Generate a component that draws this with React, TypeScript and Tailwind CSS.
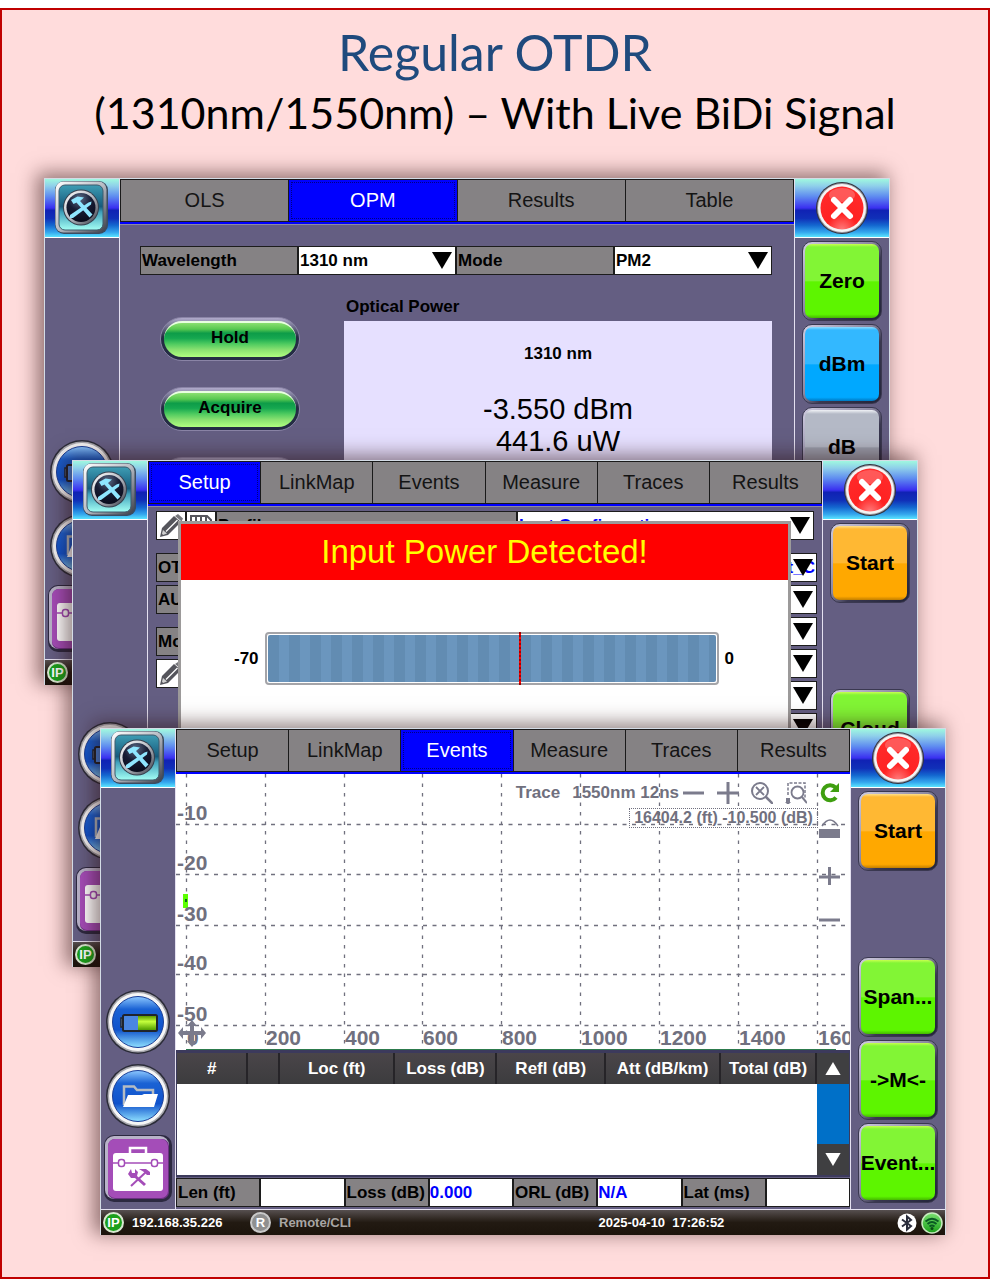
import { useState } from "react"
import type { ReactNode } from "react"

type Tone = "green" | "blue" | "gray" | "orange"

interface SideAction {
  label: string
  tone: Tone
}

const toneClasses: Record<Tone, string> = {
  green: "bg-[linear-gradient(to_bottom,#c8ff50_0,#82f535_3px,#82f535_50%,#5df500_51%,#5df500_95%,#45b800_100%)]",
  blue: "bg-[linear-gradient(to_bottom,#8fdcff_0,#33b8ff_3px,#33b8ff_50%,#00a8ff_51%,#00a8ff_95%,#0078c0_100%)]",
  gray: "bg-[linear-gradient(to_bottom,#f0f2f6_0,#b4b9c6_4px,#b4b9c6_50%,#9a9eac_51%,#9a9eac_95%,#70747f_100%)]",
  orange: "bg-[linear-gradient(to_bottom,#ffe08a_0,#ffb833_3px,#ffb833_50%,#ffa800_51%,#ffa800_95%,#c27e00_100%)]",
}

const headerGradient =
  "bg-[linear-gradient(to_bottom,#9ff8df_0%,#8fd0ea_12%,#5f8cf0_30%,#3a30f0_50%,#1022b4_54%,#1030b8_68%,#1468d0_80%,#35a8ee_92%,#5ae4ff_100%)]"

// Gradients shared by all icons on the page
function IconDefs() {
  return (
    <svg className="absolute size-0" aria-hidden="true">
      <defs>
        <linearGradient id="silver" x1="0" y1="0" x2="1" y2="1">
          <stop offset="0" stopColor="#ffffff" />
          <stop offset="0.5" stopColor="#b8bcc4" />
          <stop offset="1" stopColor="#3a3d48" />
        </linearGradient>
        <linearGradient id="teal" x1="0" y1="0" x2="0" y2="1">
          <stop offset="0" stopColor="#3e9db4" />
          <stop offset="0.48" stopColor="#165a7c" />
          <stop offset="0.6" stopColor="#3f9fba" />
          <stop offset="1" stopColor="#a4fff4" />
        </linearGradient>
        <radialGradient id="navy" cx="0.45" cy="0.2" r="0.8">
          <stop offset="0" stopColor="#5a6a86" />
          <stop offset="0.5" stopColor="#171c34" />
          <stop offset="1" stopColor="#0a0c1c" />
        </radialGradient>
        <radialGradient id="red" cx="0.5" cy="1" r="0.9">
          <stop offset="0" stopColor="#ff7a7a" />
          <stop offset="0.4" stopColor="#ff2222" />
          <stop offset="1" stopColor="#ff2a2a" />
        </radialGradient>
        <linearGradient id="ball" x1="0" y1="0" x2="0" y2="1">
          <stop offset="0" stopColor="#8cc8ff" />
          <stop offset="0.25" stopColor="#1a62d4" />
          <stop offset="0.65" stopColor="#0f52cc" />
          <stop offset="1" stopColor="#8fe0ff" />
        </linearGradient>
        <linearGradient id="cell" x1="0" y1="0" x2="0" y2="1">
          <stop offset="0" stopColor="#5c9a00" />
          <stop offset="0.4" stopColor="#c4ff3c" />
          <stop offset="1" stopColor="#4f9c00" />
        </linearGradient>
        <linearGradient id="leaf" x1="0" y1="0" x2="0" y2="1">
          <stop offset="0" stopColor="#7ae070" />
          <stop offset="1" stopColor="#1aa01a" />
        </linearGradient>
      </defs>
    </svg>
  )
}

function ToolIcon() {
  return (
    <svg viewBox="0 0 56 56" className="size-14" aria-hidden="true">
      <rect x="1" y="1" width="53" height="53" rx="9" fill="#3b4c60" />
      <rect x="1.500" y="1.500" width="51" height="51" rx="8" fill="url(#silver)" />
      <rect x="5" y="5" width="44" height="45" rx="6" fill="url(#teal)" stroke="#3c5a6c" />
      <circle cx="27" cy="27.500" r="18" fill="#35404e" />
      <circle cx="27" cy="27.500" r="17" fill="url(#silver)" />
      <circle cx="27" cy="27.500" r="14.500" fill="url(#navy)" />
      <path d="M17 20 23.500 16.500 30 17.500 26 21 38.500 34.500 35.500 37.500 22.500 22.500 19.500 24Z" fill="#8fe6ff" />
      <path d="M16 35 34.500 22.500 37.500 21.500 37 24.500 19 38 16 38Z" fill="#8fe6ff" />
    </svg>
  )
}

function CloseIcon() {
  return (
    <svg viewBox="0 0 54 54" className="size-[54px]" aria-hidden="true">
      <circle cx="27" cy="27" r="26" fill="#33333c" />
      <circle cx="27" cy="27" r="25" fill="#9a9aa2" />
      <circle cx="27" cy="27" r="24" fill="#f4f4f4" />
      <circle cx="27" cy="27" r="21.500" fill="url(#red)" />
      <ellipse cx="27" cy="14" rx="13" ry="7" fill="#ffffff" opacity="0.22" />
      <path d="M19 19 35 35M35 19 19 35" stroke="#ffffff" strokeWidth="6" strokeLinecap="round" />
    </svg>
  )
}

function BallIcon({ children }: { children: ReactNode }) {
  return (
    <svg viewBox="0 0 68 68" className="size-[68px]" aria-hidden="true">
      <circle cx="34" cy="35" r="32" fill="#2b2c38" />
      <circle cx="34" cy="35" r="30.500" fill="#a8a8ae" />
      <circle cx="34" cy="35" r="29" fill="#f6f6f6" />
      <circle cx="34" cy="35" r="25.500" fill="url(#ball)" stroke="#1a3f98" />
      {children}
    </svg>
  )
}

function BatteryIcon() {
  return (
    <BallIcon>
      <rect x="17" y="31" width="4" height="9" fill="#a9c4ec" stroke="#20242c" strokeWidth="1.500" />
      <rect x="19" y="28" width="34" height="16" rx="1.500" fill="#4a86e0" stroke="#20242c" strokeWidth="2" />
      <rect x="34" y="29" width="18" height="14" fill="url(#cell)" />
    </BallIcon>
  )
}

function FolderIcon() {
  return (
    <BallIcon>
      <path d="M20 44V25.500H30L33 29H49V35" fill="none" stroke="#b4bcc4" strokeWidth="2.500" />
      <path d="M24 34H38L40 33H54L50 46H19Z" fill="#ffffff" />
    </BallIcon>
  )
}

function ToolboxIcon() {
  return (
    <svg viewBox="0 0 68 68" className="size-[68px]" aria-hidden="true">
      <rect x="0" y="0" width="68" height="67" rx="10" fill="#2c2940" />
      <rect x="1" y="1" width="64" height="63" rx="9" fill="#b8b2c8" />
      <rect x="4" y="4" width="61" height="60" rx="7" fill="#6a3080" />
      <rect x="4" y="4" width="60" height="59" rx="7" fill="#a44db8" />
      <path d="M26 20V13H42V20" fill="none" stroke="#ffffff" strokeWidth="2.500" />
      <rect x="9" y="18" width="50" height="38" rx="3" fill="#ffffff" />
      <path d="M9 28H59" stroke="#a44db8" strokeWidth="1.500" />
      <rect x="14.500" y="24.500" width="6" height="7" rx="2.500" fill="#ffffff" stroke="#a44db8" strokeWidth="1.500" />
      <rect x="47.500" y="24.500" width="6" height="7" rx="2.500" fill="#ffffff" stroke="#a44db8" strokeWidth="1.500" />
      <path d="M27 51 42 37" stroke="#a44db8" strokeWidth="2" />
      <path d="M35 34H42L46 37 46 40 43 40 40 37Z" fill="#a44db8" />
      <path d="M27 34 28 38 31 38 31 34 34 37 33 41 42 49 40 51 31 43 27 43 24 39Z" fill="#a44db8" />
    </svg>
  )
}

function DownTriangle({ className }: { className?: string }) {
  return (
    <svg viewBox="0 0 20 17" className={className} aria-hidden="true">
      <path d="M0 0H20L10 17Z" fill="currentColor" />
    </svg>
  )
}

function PencilIcon() {
  return (
    <svg viewBox="0 0 26 26" className="size-[26px]" aria-hidden="true">
      <path d="M2 24 4 15 16 3 23 9 10 22Z" fill="#55555c" />
      <path d="M8 18.500 19.500 7" stroke="#ffffff" strokeWidth="1.200" />
      <path d="M17 3 20 1 25 5.500 23.500 8.500Z" fill="#77777c" />
      <path d="M5 17 9 20.500 5 22 4 20.500Z" fill="#d0d0d0" />
    </svg>
  )
}

function DiskIcon() {
  return (
    <svg viewBox="0 0 26 26" className="size-[26px]" aria-hidden="true">
      <path d="M3 3H19L23 7V23H3Z" fill="none" stroke="#55555c" strokeWidth="2" />
      <path d="M8 3V12H18V3M13 3V9" fill="none" stroke="#55555c" strokeWidth="2" />
    </svg>
  )
}

function StatusBadge({ text, gray }: { text: string; gray?: boolean }) {
  return (
    <span
      className={`flex size-[21px] items-center justify-center rounded-full border-2 text-[13px] leading-none font-bold text-white ${
        gray ? "border-[#c9c9c9] bg-[#8f8f8f]" : "border-[#d8e8d0] bg-[#1ba01b]"
      }`}
    >
      {text}
    </span>
  )
}

function StatusBar() {
  return (
    <footer className="flex h-[25px] items-center bg-linear-to-b from-[#575050] via-[#221a12] via-50% to-[#1c140c] px-[2px] text-[13px] font-bold text-white">
      <div className="flex w-[59%] items-center">
        <StatusBadge text="IP" />
        <span className="ml-2 w-[118px]">192.168.35.226</span>
        <StatusBadge text="R" gray />
        <span className="ml-2 text-[#a8a5a3]">Remote/CLI</span>
      </div>
      <time className="whitespace-pre">2025-04-10  17:26:52</time>
      <div className="ml-auto flex items-center gap-1">
        <svg viewBox="0 0 20 20" className="size-5" aria-label="Bluetooth">
          <circle cx="10" cy="10" r="9.500" fill="#ffffff" />
          <path d="M5 6.500 14 13 10 16.500V3.500L14 7 5 13.500" fill="none" stroke="#2a2d3c" strokeWidth="2" />
        </svg>
        <svg viewBox="0 0 22 22" className="size-[22px]" aria-label="Wi-Fi">
          <circle cx="11" cy="11" r="10" fill="url(#leaf)" stroke="#c8ecc0" strokeWidth="1.500" />
          <path d="M4.500 9.500Q11 4 17.500 9.500M6.500 12Q11 8 15.500 12M8.500 14.500Q11 12.500 13.500 14.500" fill="none" stroke="#0a5a24" strokeWidth="1.800" />
          <circle cx="11" cy="16.500" r="1.500" fill="#0a4a14" />
        </svg>
      </div>
    </footer>
  )
}

function SideButton({ label, tone }: SideAction) {
  return (
    <button
      type="button"
      className="h-20 w-20 rounded-[10px] border border-[#3a3850] bg-[linear-gradient(135deg,#cfcbe0_0%,#8a86a0_45%,#3a3850_60%,#22243a_100%)] p-[2px]"
    >
      <span
        className={`flex h-full items-center justify-center rounded-[7px] text-[21px] font-bold text-black ${toneClasses[tone]}`}
      >
        {label}
      </span>
    </button>
  )
}

interface DeviceWindowProps {
  tabs: string[]
  initialTab: string
  actions: (SideAction | null)[]
  className: string
  children: ReactNode
}

function DeviceWindow({ tabs, initialTab, actions, className, children }: DeviceWindowProps) {
  const [active, setActive] = useState(initialTab)

  return (
    <section className={`relative border-x border-t border-[#d4dce6] bg-[#645e82] shadow-[-5px_-3px_18px_2px_rgba(40,10,10,0.5)] ${className}`}>
      <div className="flex min-h-[481px] border-b border-[#e4e0f0]">
        {/* Left rail */}
        <div className="flex w-[75px] shrink-0 flex-col items-center border-r border-[#e4e0f0]">
          <button type="button" aria-label="Tools" className={`flex h-[59px] w-full items-center justify-center border-b border-white ${headerGradient}`}>
            <ToolIcon />
          </button>
          <div className="mt-auto flex flex-col gap-[6px] pb-[6px]">
            <button type="button" aria-label="Battery"><BatteryIcon /></button>
            <button type="button" aria-label="Files"><FolderIcon /></button>
            <button type="button" aria-label="Toolbox"><ToolboxIcon /></button>
          </div>
        </div>

        <div className="relative flex min-w-0 flex-1 flex-col">
          <nav className="flex border-b-2 border-[#0000ff]">
            {tabs.map((tab) => (
              <button
                key={tab}
                type="button"
                onClick={() => setActive(tab)}
                className={`h-[43px] flex-1 basis-0 border-y border-r border-[#1a1a1a] p-[2px] text-[20px] first:border-l ${
                  tab === active ? "bg-[#0000ff] text-white" : "bg-[#858284] text-[#141414]"
                }`}
              >
                <span
                  className={`flex h-full items-center justify-center border border-dotted pb-[2px] ${
                    tab === active ? "border-[#000080]" : "border-transparent"
                  }`}
                >
                  {tab}
                </span>
              </button>
            ))}
          </nav>
          {children}
        </div>

        {/* Right rail */}
        <div className="w-[95px] shrink-0 border-l border-[#e4e0f0]">
          <button type="button" aria-label="Close" className={`flex h-[59px] w-full items-center justify-center border-b border-white ${headerGradient}`}>
            <CloseIcon />
          </button>
          <div className="flex flex-col gap-[3px] pt-[3px] pl-[7px]">
            {actions.map((action, i) =>
              action ? <SideButton key={i} {...action} /> : <div key={i} className="h-20" />
            )}
          </div>
        </div>
      </div>
      <StatusBar />
    </section>
  )
}

interface FieldSelectProps {
  id: string
  options: string[]
  label?: string
  className?: string
}

function FieldSelect({ id, options, label, className }: FieldSelectProps) {
  return (
    <div className="relative min-w-0 flex-1 basis-0">
      <select
        id={id}
        aria-label={label}
        className={`block h-[29px] w-full appearance-none border border-[#1c1c1c] bg-white px-px text-[17px] font-bold ${className ?? "text-black"}`}
      >
        {options.map((option) => (
          <option key={option}>{option}</option>
        ))}
      </select>
      <DownTriangle className="pointer-events-none absolute top-[6px] right-1 h-[17px] w-5 text-black" />
    </div>
  )
}

const labelCell = "flex h-[29px] items-center border border-[#1c1c1c] bg-[#858284] px-px text-[17px] font-bold text-black"

function PowerMeter() {
  return (
    <div className="border-t border-[#8c8aa0] pt-[21px] pr-[22px] pl-5">
      <div className="flex">
        <label htmlFor="wavelength" className={`${labelCell} w-1/4`}>Wavelength</label>
        <FieldSelect id="wavelength" options={["1310 nm", "1550 nm"]} />
        <label htmlFor="mode" className={`${labelCell} w-1/4`}>Mode</label>
        <FieldSelect id="mode" options={["PM2", "PM1"]} />
      </div>
      <div className="flex gap-11 pt-[19px] pl-5">
        <div className="flex w-[140px] shrink-0 flex-col gap-[26px] pt-[23px]">
          {["Hold", "Acquire", "Save"].map((name) => (
            <button
              key={name}
              type="button"
              className="h-11 rounded-full border border-[#8a84a6] bg-[linear-gradient(to_bottom,#b0aacb,#242c44_45%)] p-[3px] text-[17px] font-bold text-black"
            >
              <span className="flex h-full items-center justify-center rounded-full border-t-2 border-[#e8ffe0] bg-[linear-gradient(to_bottom,#8ae070_0%,#58c850_18%,#0d9c48_30%,#16a850_45%,#50cc60_62%,#88e070_78%,#b0ff80_100%)] pb-1">
                {name}
              </span>
            </button>
          ))}
        </div>
        <div className="min-w-0 flex-1">
          <h2 className="px-[2px] pb-px text-[17px] leading-[26px] font-bold text-black">Optical Power</h2>
          <div className="h-[200px] bg-[#e6e0ff] pt-5 text-center text-black">
            <p className="text-[17px] leading-[26px] font-bold">1310 nm</p>
            <p className="pt-[26px] text-[29px] leading-8">
              -3.550 dBm
              <br />
              441.6 uW
            </p>
          </div>
        </div>
      </div>
    </div>
  )
}

function SetupPanel() {
  const settings = ["Fiber", "Range", "Pulse", "Time", "Index"]

  return (
    <>
      <div className="border-t border-[#8c8aa0] px-2 pt-1">
        <div className="flex">
          <button type="button" aria-label="Edit profile" className="h-[29px] border border-[#1c1c1c] bg-white px-px"><PencilIcon /></button>
          <button type="button" aria-label="Save profile" className="h-[29px] border border-[#1c1c1c] bg-white px-px"><DiskIcon /></button>
          <label htmlFor="profile" className={`${labelCell} flex-1 basis-0`}>Profile</label>
          <FieldSelect id="profile" options={["Last Configuration"]} className="text-[#0000ff]" />
        </div>
        <div className="flex justify-between pt-[13px]">
          <div className="w-1/3">
            <div className={labelCell}>OTDR</div>
            <div className={`${labelCell} mt-[3px]`}>AUTO</div>
            <div className={`${labelCell} mt-[13px]`}>Mode</div>
            <button type="button" aria-label="Edit mode" className="mt-[3px] h-[29px] border border-[#1c1c1c] bg-white px-px"><PencilIcon /></button>
          </div>
          <div className="-mr-[3px] flex w-1/3 flex-col gap-[3px]">
            <div className="flex">
              <FieldSelect id="config" label="Configuration" options={["Last_C"]} className="text-right text-[#0000ff]" />
            </div>
            {settings.map((name) => (
              <div key={name} className="flex">
                <FieldSelect id={name} label={name} options={[""]} />
              </div>
            ))}
          </div>
        </div>
      </div>

      {/* Power warning dialog */}
      <div role="dialog" aria-label="Input Power Detected!" className="absolute top-[60px] right-[31px] left-[30px] h-[320px] border-[3px] border-[#9c9a9a] bg-white">
        <h2 className="bg-[#ff0000] text-center text-[33px] leading-[56px] text-[#ffff00]">Input Power Detected!</h2>
        <div className="mt-[52px] flex items-center gap-[6px] pr-[54px] pl-[53px] text-[17px] font-bold text-black">
          <span>-70</span>
          <div className="relative h-[53px] flex-1 rounded-[4px] border-2 border-[#a4a4a8] p-px">
            <div className="h-full rounded-[2px] bg-[repeating-linear-gradient(to_right,#628cb2_0,#628cb2_11px,#6b96be_11px,#6b96be_21px)]" />
            <div className="absolute -top-[2px] -bottom-[2px] left-[56%] border-l-2 border-dotted border-[#a00000] bg-[#ff0000]" />
          </div>
          <span>0</span>
        </div>
      </div>
    </>
  )
}

const gridX = [10, 89, 168, 246, 325, 404, 483, 562, 641]
const gridY = [50, 100, 151, 200, 251]

function ChartButton({ label, children }: { label: string; children: ReactNode }) {
  return (
    <button type="button" aria-label={label} className="size-[22px]">
      <svg viewBox="0 0 22 22" className="size-[22px]" fill="none" stroke="#7b7b8c" strokeWidth="3" aria-hidden="true">
        {children}
      </svg>
    </button>
  )
}

function TraceChart() {
  return (
    <div className="relative bg-white">
      <svg viewBox="0 0 674 276" className="block h-auto w-full text-[21px] font-bold" fill="#70707e">
        <g stroke="#70707e" strokeWidth="1.300">
          {gridX.map((x) => (
            <path key={x} d={`M${x + 0.5} 0V271`} strokeDasharray="3.500 6" />
          ))}
          {gridY.map((y) => (
            <path key={y} d={`M0 ${y + 0.5}H670`} strokeDasharray="4 5.500" />
          ))}
        </g>
        <rect x="7" y="120" width="5" height="14" fill="#5cff00" />
        <rect x="9" y="125" width="2" height="3" fill="#0a6a20" />
        {gridY.map((y, i) => (
          <text key={y} x="1" y={y - 4}>{-10 * (i + 1)}</text>
        ))}
        {gridX.map((x, i) => (
          <text key={x} x={x + 1} y="271">{i * 200}</text>
        ))}
        <path d="M10 275.500H660" stroke="#2c7a4c" />
        <path
          d="M16 246 21 252H18V257H25V253L30 259 25 265V261H18V267H21L16 273 11 267H14V261H7V265L2 259 7 253V257H14V252H11Z"
          fill="#7b7b8c"
        />
      </svg>

      <div className="absolute top-2 right-[9px] flex items-center gap-3 text-[17px] leading-[22px] font-bold text-[#70707e]">
        <span>Trace</span>
        <span className="-mr-2">1550nm 12ns</span>
        <ChartButton label="Shrink"><path d="M0 11H21" /></ChartButton>
        <ChartButton label="Grow"><path d="M0 11H22M11 0V22" /></ChartButton>
        <ChartButton label="Reset zoom">
          <circle cx="9" cy="9" r="8" strokeWidth="2" />
          <path d="M14.500 14.500 22 22" strokeWidth="2.500" />
          <path d="M5 5 13 13M13 5 5 13" strokeWidth="1.800" />
        </ChartButton>
        <ChartButton label="Zoom area">
          <path d="M3 13V1H20V16" strokeWidth="1.500" strokeDasharray="3 1.500" />
          <circle cx="12.500" cy="10.500" r="6" strokeWidth="1.800" />
          <path d="M17 15 22 21" strokeWidth="2" />
          <path d="M1 16H5V20H6L3 23 0 20H1Z" fill="#7b7b8c" stroke="none" />
        </ChartButton>
        <ChartButton label="Refresh">
          <path d="M16.500 5.500A7.500 7.500 0 1 0 17 15.500" stroke="#3f9f10" strokeWidth="4" />
          <path d="M20 1V10H11Z" fill="#3f9f10" stroke="none" />
        </ChartButton>
      </div>
      <div className="absolute top-[45px] right-[9px] flex flex-col gap-[22px]">
        <ChartButton label="Lock">
          <path d="M3 7Q11 -5 19 7" strokeWidth="1.500" />
          <rect x="0" y="10" width="21" height="9" fill="#7b7b8c" stroke="none" />
        </ChartButton>
        <ChartButton label="Zoom in"><path d="M0 14H21M10.500 4V24" /></ChartButton>
        <ChartButton label="Zoom out"><path d="M0 13H21" /></ChartButton>
      </div>
      <p className="absolute top-[34px] right-[32px] w-[189px] border border-dotted border-[#70707e] text-center text-[16px] leading-[18px] font-bold whitespace-nowrap text-[#70707e]">
        16404.2 (ft) -10.500 (dB)
      </p>
    </div>
  )
}

const columns = [
  { name: "#", width: "w-[11%]" },
  { name: "", width: "w-[5%]" },
  { name: "Loc (ft)", width: "w-[18%]" },
  { name: "Loss (dB)", width: "w-[16%]" },
  { name: "Refl (dB)", width: "w-[17%]" },
  { name: "Att (dB/km)", width: "w-[18%]" },
  { name: "Total (dB)", width: "w-[15%]" },
]

const totals = [
  { label: "Len (ft)", value: "" },
  { label: "Loss (dB)", value: "0.000" },
  { label: "ORL (dB)", value: "N/A" },
  { label: "Lat (ms)", value: "" },
]

function EventsPanel() {
  return (
    <>
      <TraceChart />
      <div className="flex h-[127px] border-x border-t-[3px] border-b-2 border-[#3c3a5c] bg-white">
        <div className="min-w-0 flex-1">
          <table className="w-full table-fixed border-collapse text-[17px]">
            <thead>
              <tr className="h-[31px] bg-linear-to-b from-[#4a4549] to-[#3c3c3e] text-white">
                {columns.map((column, i) => (
                  <th key={i} className={`border-r-2 border-[#262428] p-0 whitespace-nowrap ${column.width}`}>
                    {column.name}
                  </th>
                ))}
              </tr>
            </thead>
            <tbody />
          </table>
        </div>
        <div className="flex w-8 flex-col bg-[#0070c8]">
          <button type="button" aria-label="Scroll up" className="flex h-[31px] items-center justify-center bg-[#3f3f41] text-white">
            <DownTriangle className="h-[13px] w-4 rotate-180" />
          </button>
          <button type="button" aria-label="Scroll down" className="mt-auto flex h-[31px] items-center justify-center bg-[#3f3f41] text-white">
            <DownTriangle className="h-[13px] w-4" />
          </button>
        </div>
      </div>
      <div className="flex pt-px">
        {totals.map(({ label, value }) => (
          <div key={label} className="flex min-w-0 flex-1">
            <label htmlFor={label} className={`${labelCell} w-1/2 whitespace-nowrap`}>{label}</label>
            <input
              id={label}
              readOnly
              value={value}
              className="h-[29px] w-1/2 border border-[#1c1c1c] bg-white text-[17px] font-bold text-[#0000ff]"
            />
          </div>
        ))}
      </div>
    </>
  )
}

const otdrTabs = ["Setup", "LinkMap", "Events", "Measure", "Traces", "Results"]

export default function App() {
  return (
    <div className="bg-white pt-2 font-['Liberation_Sans',Arial,sans-serif]">
      <IconDefs />
      <main className="border-2 border-[#c00000] bg-[#ffdcdc] pb-[42px]">
        <header className="pt-[10px] text-center font-['Lato','Open_Sans',sans-serif]">
          <h1 className="text-[50px] leading-[64px] text-[#1f4a7d]">Regular OTDR</h1>
          <p className="text-[43px] leading-[58px] text-black">(1310nm/1550nm) – With Live BiDi Signal</p>
        </header>
        <div className="px-[42px] pt-9">
          <DeviceWindow
            tabs={["OLS", "OPM", "Results", "Table"]}
            initialTab="OPM"
            actions={[
              { label: "Zero", tone: "green" },
              { label: "dBm", tone: "blue" },
              { label: "dB", tone: "gray" },
            ]}
            className="mr-14"
          >
            <PowerMeter />
          </DeviceWindow>
          <DeviceWindow
            tabs={otdrTabs}
            initialTab="Setup"
            actions={[{ label: "Start", tone: "orange" }, null, { label: "Cloud", tone: "green" }]}
            className="-mt-[225px] mr-7 ml-7"
          >
            <SetupPanel />
          </DeviceWindow>
          <DeviceWindow
            tabs={otdrTabs}
            initialTab="Events"
            actions={[
              { label: "Start", tone: "orange" },
              null,
              { label: "Span...", tone: "green" },
              { label: "->M<-", tone: "green" },
              { label: "Event...", tone: "green" },
            ]}
            className="-mt-[239px] ml-14"
          >
            <EventsPanel />
          </DeviceWindow>
        </div>
      </main>
    </div>
  )
}
